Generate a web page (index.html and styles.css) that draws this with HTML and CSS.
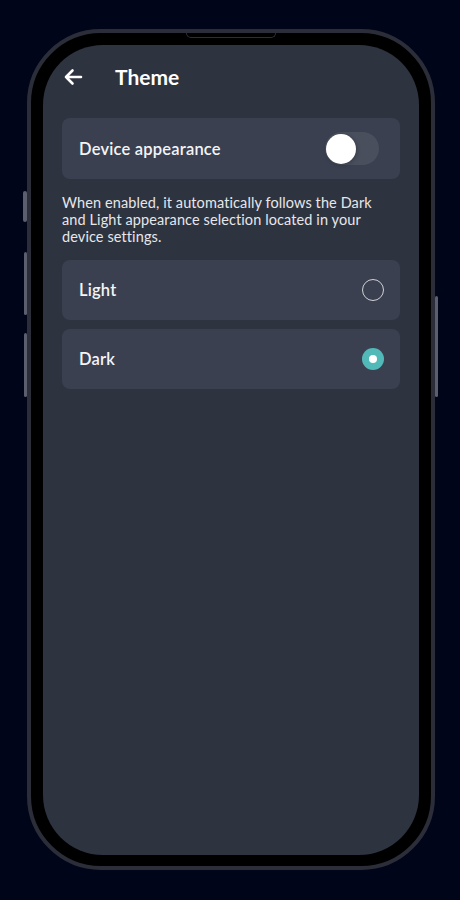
FILE: index.html
```html
<!DOCTYPE html>
<html lang="en">
<head>
<meta charset="utf-8">
<title>Theme</title>
<link rel="stylesheet" href="styles.css">
</head>
<body>
<div class="device">
  <span class="btn btn-action"></span>
  <span class="btn btn-vol-up"></span>
  <span class="btn btn-vol-down"></span>
  <span class="btn btn-power"></span>
  <span class="notch"></span>
  <main class="screen">
    <header class="topbar">
      <svg class="back" viewBox="0 0 20 20" width="20" height="20" aria-hidden="true">
        <path d="M18 10H3M9.5 3.5L3 10l6.5 6.5" fill="none" stroke="#fff" stroke-width="2.6" stroke-linecap="round" stroke-linejoin="round"/>
      </svg>
      <h1 class="title">Theme</h1>
    </header>
    <section class="card card-toggle">
      <span class="label">Device appearance</span>
      <span class="switch"><span class="knob"></span></span>
    </section>
    <p class="hint">When enabled, it automatically follows the Dark and Light appearance selection located in your device settings.</p>
    <div class="options">
      <div class="card">
        <span class="label">Light</span>
        <span class="radio"></span>
      </div>
      <div class="card">
        <span class="label">Dark</span>
        <span class="radio radio-on"></span>
      </div>
    </div>
  </main>
</div>
</body>
</html>
```
FILE: styles.css
```css
html, body {
  margin: 0;
  padding: 0;
}
body {
  width: 460px;
  height: 900px;
  background: #01051a;
  font-family: "Lato", "Noto Sans", sans-serif;
  color: #f4f4f6;
  overflow: hidden;
}
.device {
  position: relative;
  box-sizing: border-box;
  width: 408px;
  height: 841px;
  margin: 29px 0 0 27px;
  border: 4px solid #2b2e39;
  border-radius: 74px;
  background: #000;
  padding: 12px;
}
.btn {
  position: absolute;
  background: #5b5e6c;
  border-radius: 2px;
}
.btn-action { left: -8px; width: 4px; top: 158px; height: 31px; }
.btn-vol-up { left: -7px; width: 3px; top: 219px; height: 63px; }
.btn-vol-down { left: -7px; width: 3px; top: 300px; height: 64px; }
.btn-power { right: -7px; width: 3px; top: 263px; height: 101px; }
.notch {
  position: absolute;
  top: 0;
  left: 155px;
  width: 88px;
  height: 4px;
  border: 1px solid #2c2f38;
  border-top: none;
  border-radius: 0 0 5px 5px;
}
.screen {
  box-sizing: border-box;
  height: 810px;
  border-radius: 60px;
  background: #2e3340;
  padding: 20px 19px 0 19px;
  display: flex;
  flex-direction: column;
}
.topbar {
  display: flex;
  align-items: center;
  height: 24px;
  padding-left: 1px;
  margin-bottom: 29px;
}
.back {
  display: block;
}
.title {
  margin: 0 0 0 32px;
  font-size: 21px;
  font-weight: 700;
  line-height: 24px;
  color: #fff;
}
.card {
  display: flex;
  align-items: center;
  justify-content: space-between;
  height: 60px;
  box-sizing: border-box;
  padding: 0 16px 0 17px;
  background: #3b4050;
  border-radius: 8px;
}
.card-toggle {
  height: 61px;
  padding-right: 21px;
}
.label {
  font-size: 16.5px;
  font-weight: 600;
  letter-spacing: 0.2px;
  color: #f4f4f6;
}
.switch {
  display: flex;
  align-items: center;
  width: 54px;
  height: 33px;
  border-radius: 17px;
  background: #4a4f5e;
  padding: 0 1px;
  box-sizing: border-box;
}
.knob {
  width: 30px;
  height: 30px;
  border-radius: 50%;
  background: #fff;
  box-shadow: 1px 1px 4px rgba(0, 0, 0, 0.25);
}
.hint {
  max-width: 330px;
  margin: 15px 0 15px;
  font-size: 14.5px;
  letter-spacing: 0.1px;
  line-height: 17px;
  color: #e6e7ea;
}
.options {
  display: flex;
  flex-direction: column;
  gap: 9px;
}
.radio {
  box-sizing: border-box;
  width: 22px;
  height: 22px;
  border-radius: 50%;
  border: 1.5px solid #d0d1d5;
}
.radio-on {
  border: none;
  background: #52b9b9;
  display: flex;
  align-items: center;
  justify-content: center;
}
.radio-on::after {
  content: "";
  width: 8px;
  height: 8px;
  border-radius: 50%;
  background: #fff;
}
```
